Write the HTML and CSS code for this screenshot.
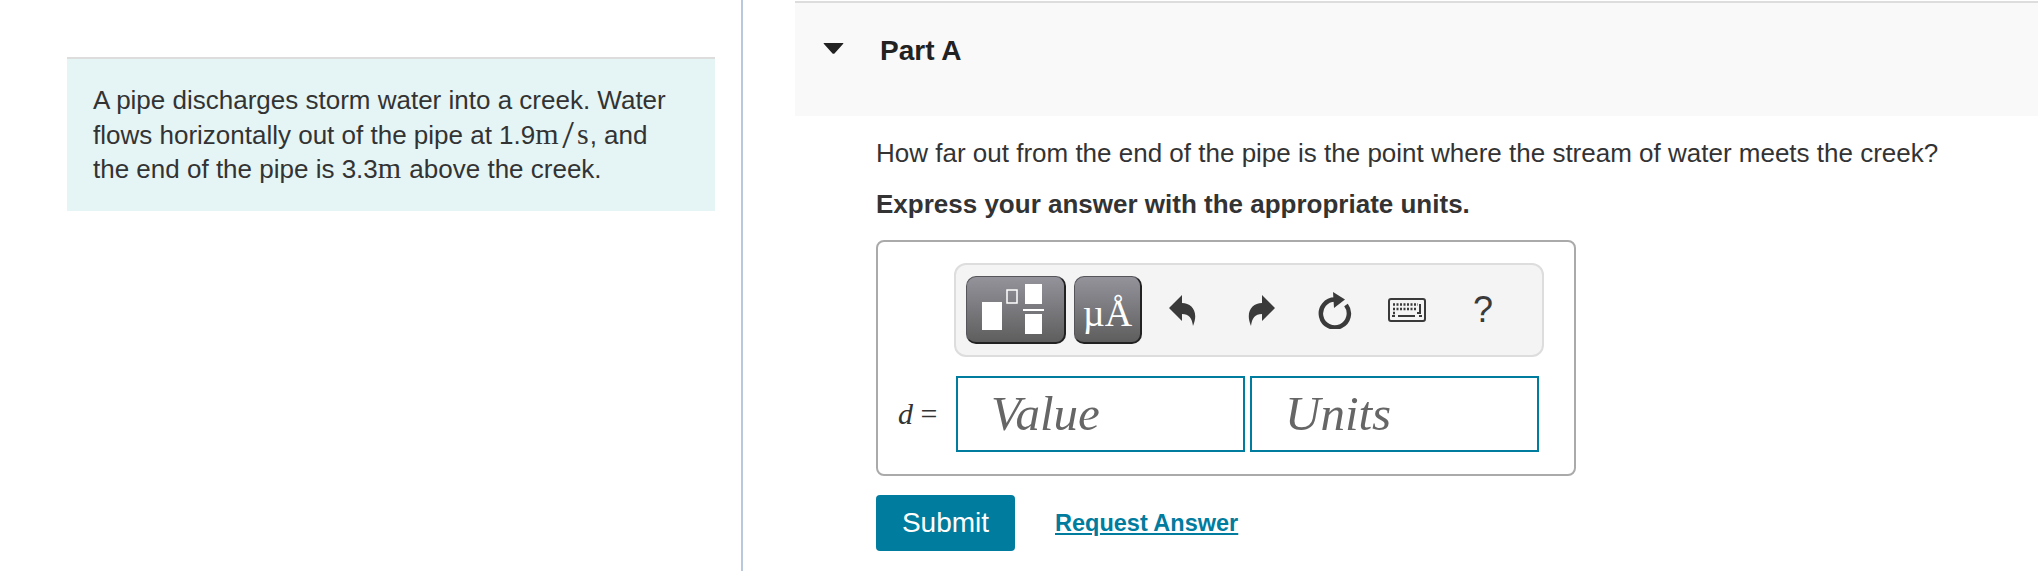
FILE: index.html
```html
<!DOCTYPE html>
<html lang="en">
<head>
  <meta charset="UTF-8">
  <title>Part A</title>
  <link rel="stylesheet" href="styles.css">
</head>
<body>

<div class="pagina">
  <!-- left column -->
  <aside class="lateral">
    <div class="intro">
      <p>A pipe discharges storm water into a creek. Water flows horizontally out of the pipe at 1.9<span class="mate">m<span class="barra">/</span>s</span>, and the end of the pipe is 3.3<span class="mate">m</span> above the creek.</p>
    </div>
  </aside>

  <!-- right column -->
  <main class="parte">
    <div class="parte-cabecera">
      <svg class="flecha" width="21" height="11" viewBox="0 0 21 11"><path d="M1 0H20Q21 0 20 1L11.500 10.500Q10.500 11 9.500 10.500L1 1Q0 0 1 0Z" fill="#222"/></svg>
      <h2>Part A</h2>
    </div>

    <div class="parte-cuerpo">
      <p class="pregunta">How far out from the end of the pipe is the point where the stream of water meets the creek?</p>
      <p class="instruccion">Express your answer with the appropriate units.</p>

      <div class="respuesta">
        <div class="barra-herramientas">
          <button class="plantilla ancho">
            <svg width="96" height="64" viewBox="0 0 96 64">
              <rect x="14" y="24" width="20" height="28" fill="#fff"/>
              <rect x="39" y="12" width="10" height="13" fill="none" stroke="#fff" stroke-width="1.500"/>
              <rect x="57" y="6" width="17" height="20" fill="#fff"/>
              <rect x="55" y="31" width="21" height="2" fill="#fff"/>
              <rect x="57" y="36" width="17" height="20" fill="#fff"/>
            </svg>
          </button>
          <button class="plantilla unidades">µÅ</button>

          <span class="icono icono-deshacer">
            <svg width="27" height="32" viewBox="0 0 27 32"><path d="M0 14L13 1V9C23 9 30 18 24 32C23 24 20 20 13 20V27Z" fill="#3a3a3a"/></svg>
          </span>
          <span class="icono icono-rehacer">
            <svg width="27" height="32" viewBox="0 0 27 32"><path d="M27 14L14 1V9C4 9 -3 18 3 32C4 24 7 20 14 20V27Z" fill="#3a3a3a"/></svg>
          </span>
          <span class="icono icono-reiniciar">
            <svg width="34" height="37" viewBox="0 0 34 37"><path d="M17 7.500A14 14 0 1 0 28 13" fill="none" stroke="#3a3a3a" stroke-width="4.500"/><path d="M15 0L27 7.500L16 16Z" fill="#3a3a3a"/></svg>
          </span>
          <span class="icono icono-teclado">
            <svg width="38" height="24" viewBox="0 0 38 24">
              <rect x="1" y="1" width="36" height="22" rx="2" fill="#f4f4f4" stroke="#3a3a3a" stroke-width="2"/>
              <path d="M5 6.500H30M5 11H28M5 15H8" fill="none" stroke="#3a3a3a" stroke-width="2.500" stroke-dasharray="2 1.500"/>
              <path d="M32 6V15H29" fill="none" stroke="#3a3a3a" stroke-width="2"/>
              <path d="M10 18H27M4 18H7M31 18H34" stroke="#3a3a3a" stroke-width="2"/>
            </svg>
          </span>
          <span class="ayuda">?</span>
        </div>

        <div class="fila-entrada">
          <span class="etiqueta"><i>d</i> =</span>
          <input class="caja" type="text" placeholder="Value">
          <input class="caja" type="text" placeholder="Units">
        </div>
      </div>

      <div class="acciones">
        <button class="enviar">Submit</button>
        <a class="pedir" href="#">Request Answer</a>
      </div>
    </div>
  </main>
</div>

</body>
</html>
```

FILE: styles.css
```css
body {
  font-family: "Liberation Sans", Arial, sans-serif;
  color: #333;
  background-color: white;
  margin: 0;
  overflow: hidden;
}

.pagina {
  display: flex;
  height: 571px;
}

/* left column */
.lateral {
  width: 743px;
  flex: none;
  padding: 57px 26px 0 67px;
  box-sizing: border-box;
  border-right: 2px solid #b9c9dd;
  margin-right: 52px;
}

.intro {
  background-color: #e5f5f6;
  border-top: 2px solid #ddd;
  padding: 24px 36px 25px 26px;
  height: 154px;
  box-sizing: border-box;
}

.intro p {
  margin: 0;
  font-size: 26px;
  line-height: 34.500px;
}

.mate {
  font-family: "Liberation Serif", serif;
  font-size: 30px;
  line-height: 0;
  letter-spacing: 1px;
}

.barra {
  display: inline-block;
  transform: scale(1.4, 1.35);
  margin: 0 4px;
}

/* right column */
.parte {
  flex: 1;
}

.parte-cabecera {
  display: flex;
  align-items: flex-start;
  height: 113px;
  margin-top: 1px;
  border-top: 2px solid #ddd;
  background-color: #f9f9f9;
}

.flecha {
  margin: 40px 36px 0 28px;
}

.parte-cabecera h2 {
  margin: 32px 0 0;
  font-size: 28px;
  line-height: 32px;
  color: #222;
}

.parte-cuerpo {
  padding-left: 81px;
}

.pregunta {
  margin: 19px 0 0;
  font-size: 26px;
  line-height: 36px;
}

.instruccion {
  margin: 15px 0 0;
  font-size: 26px;
  line-height: 36px;
  font-weight: bold;
}

.respuesta {
  width: 700px;
  height: 236px;
  margin-top: 18px;
  padding: 21px 26px 0 76px;
  box-sizing: border-box;
  border: 2px solid #aaa;
  border-radius: 8px;
}

.barra-herramientas {
  display: flex;
  align-items: center;
  width: 590px;
  height: 94px;
  box-sizing: border-box;
  padding-left: 10px;
  background-color: #f4f4f4;
  border: 2px solid #ddd;
  border-radius: 12px;
}

.plantilla {
  height: 68px;
  padding: 0;
  box-sizing: border-box;
  border: 1px solid #55555a;
  border-right: 2px solid #222;
  border-bottom: 2px solid #222;
  border-radius: 10px;
  background: linear-gradient(#94939b, #5e5e5e);
  color: white;
  font-family: "Liberation Serif", serif;
  font-size: 38px;
  white-space: nowrap;
}

.plantilla svg {
  display: block;
  margin: 0 auto;
}

.ancho {
  width: 100px;
  margin-right: 8px;
}

.unidades {
  width: 68px;
  margin-right: 27px;
  padding-top: 6px;
}

.icono {
  display: flex;
}

.icono-deshacer { margin-right: 52px; }
.icono-rehacer { margin-right: 43px; }
.icono-reiniciar { margin-right: 36px; }
.icono-teclado { margin-right: 47px; }

.ayuda {
  font-size: 36px;
  color: #3a3a3a;
}

.fila-entrada {
  display: flex;
  align-items: center;
  margin: 19px 0 0 -56px;
}

.etiqueta {
  width: 58px;
  font-family: "Liberation Serif", serif;
  font-size: 30px;
  white-space: nowrap;
}

.caja {
  width: 289px;
  height: 76px;
  box-sizing: border-box;
  margin-right: 5px;
  padding: 0 0 2px 33px;
  border: 2px solid #007c9e;
  border-radius: 0;
  outline: none;
  font-family: "Liberation Serif", serif;
  font-style: italic;
  font-size: 49px;
}

.caja::placeholder {
  color: #666;
  opacity: 1;
}

.acciones {
  display: flex;
  align-items: center;
  margin-top: 19px;
}

.enviar {
  width: 139px;
  height: 56px;
  padding: 0;
  border: none;
  border-radius: 4px;
  background-color: #007c9e;
  color: white;
  font-family: "Liberation Sans", Arial, sans-serif;
  font-size: 28px;
}

.pedir {
  margin-left: 40px;
  color: #007c9e;
  font-size: 23.500px;
  font-weight: bold;
}
```
